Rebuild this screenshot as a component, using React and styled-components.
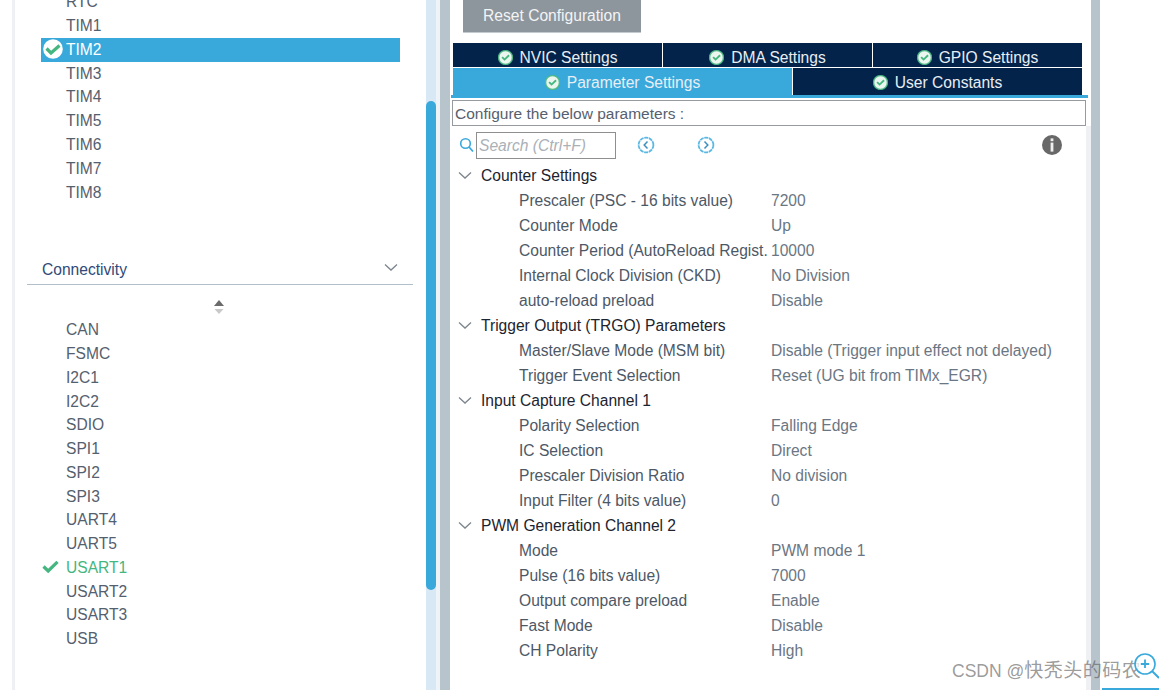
import React from "react";
import styled, { createGlobalStyle } from "styled-components";

const Global = createGlobalStyle`
  html, body { margin: 0; padding: 0; background: #fff; }
  body { font-family: "Liberation Sans", Arial, sans-serif; }
`;

const Page = styled.div`
  position: relative;
  width: 1159px;
  height: 690px;
  overflow: hidden;
  display: flex;
  background: #fff;
`;

const LeftGutter = styled.div`
  width: 12px;
  flex: none;
`;

const LeftEdge = styled.div`
  width: 3px;
  flex: none;
  background: #eef0f4;
`;

const LeftPanel = styled.aside`
  width: 411px;
  flex: none;
  padding-left: 12px;
  box-sizing: border-box;
  height: 690px;
`;

const List = styled.ul`
  list-style: none;
  margin: ${(p) => p.$top}px 0 0;
  padding: 0 26px 0 14px;
`;

const Item = styled.li`
  position: relative;
  height: 23.78px;
  line-height: 23.78px;
  padding-left: 25px;
  font-size: 15.6px;
  color: ${(p) => (p.$selected ? "#fff" : p.$ok ? "#45b680" : "#55606e")};
  background: ${(p) => (p.$selected ? "#39a9dc" : "transparent")};
`;

const ItemIcon = styled.span`
  position: absolute;
  left: ${(p) => p.$left}px;
  top: ${(p) => p.$top}px;
  display: flex;
`;

const SectionHead = styled.div`
  display: flex;
  align-items: center;
  justify-content: space-between;
  height: 30px;
  margin: 50px 13px 0 0;
  padding: 1px 15px 0;
  box-sizing: content-box;
  height: 29px;
  border-bottom: 1px solid #b0bfca;
  font-size: 15.6px;
  color: #2f4a78;
  svg {
    margin-bottom: 5px;
  }
`;

const Sorter = styled.div`
  display: flex;
  justify-content: center;
  height: 33px;
  padding: 15px 0 0;
  box-sizing: border-box;
  margin-right: 16px;
`;

const Track = styled.div`
  position: relative;
  width: 10px;
  flex: none;
  background: #d9e8f5;
`;

const Thumb = styled.div`
  position: absolute;
  left: 0;
  top: 101px;
  width: 10px;
  height: 489px;
  border-radius: 5px;
  background: #39a9dc;
`;

const Spacer = styled.div`
  width: ${(p) => p.$w}px;
  flex: none;
  background: ${(p) => p.$c || "transparent"};
`;

const Main = styled.main`
  width: 635px;
  flex: none;
  display: flex;
  flex-direction: column;
  height: 690px;
`;

const ResetButton = styled.div`
  width: 178px;
  height: 33px;
  margin-left: 12px;
  box-sizing: border-box;
  background: #8e969d;
  border-bottom: 1px solid #c4cbd0;
  color: #f2f4f5;
  font-size: 15.6px;
  line-height: 31px;
  text-align: center;
`;

const TabRow = styled.div`
  display: flex;
  margin-left: 2px;
  width: 629px;
  height: ${(p) => p.$h}px;
  margin-top: ${(p) => p.$mt}px;
`;

const Tab = styled.div`
  flex: ${(p) => p.$flex};
  box-sizing: border-box;
  padding-top: ${(p) => p.$pt || 0}px;
  display: flex;
  align-items: center;
  justify-content: center;
  gap: 7px;
  font-size: 15.6px;
  color: #e8eef3;
  background: ${(p) => (p.$active ? "#39a9dc" : "#03234b")};
  & + & {
    margin-left: 1px;
  }
`;

const TabLine = styled.div`
  height: 3px;
  width: 637px;
  background: #39a9dc;
`;

const ConfigBox = styled.div`
  margin-top: 2px;
  margin-left: 1px;
  width: 634px;
  height: 26px;
  box-sizing: border-box;
  border: 1px solid #979a9e;
  padding-left: 2px;
  font-size: 15.5px;
  line-height: 25px;
  color: #56606e;
`;

const SearchRow = styled.div`
  display: flex;
  align-items: center;
  height: 28px;
  margin-top: 5px;
  padding-left: 8px;
`;

const SearchInput = styled.div`
  width: 140px;
  height: 27px;
  margin-left: 2px;
  box-sizing: border-box;
  border: 1px solid #8f8f8f;
  padding-left: 2px;
  font-size: 15.6px;
  font-style: italic;
  line-height: 26px;
  color: #aab0b6;
`;

const NavButton = styled.span`
  display: flex;
  margin-left: ${(p) => p.$ml}px;
`;

const InfoButton = styled.span`
  display: flex;
  margin-left: auto;
  margin-right: 24px;
`;

const Tree = styled.div`
  margin-top: 4px;
`;

const GroupRow = styled.div`
  display: flex;
  align-items: center;
  height: 25px;
  padding-left: 7px;
  gap: 9px;
  font-size: 15.6px;
  color: #1d2430;
`;

const ParamRow = styled.div`
  display: grid;
  grid-template-columns: 252px 1fr;
  height: 25px;
  line-height: 25px;
  padding-left: 68px;
  font-size: 15.6px;
  white-space: nowrap;
`;

const ParamName = styled.span`
  color: #4d5866;
`;

const ParamValue = styled.span`
  color: #6b7683;
`;

const RightEdge = styled.div`
  width: 5px;
  flex: none;
  margin-top: 126px;
  background: #eef0f4;
`;

const Watermark = styled.div`
  position: absolute;
  left: 952px;
  top: 660px;
  font-size: 17.5px;
  line-height: 22px;
  white-space: nowrap;
  color: rgba(90, 90, 90, 0.62);
  font-family: "Liberation Sans", "Noto Sans CJK SC", sans-serif;
`;

const WatermarkName = styled.span`
  font-size: 19px;
  letter-spacing: 0.5px;
`;

const ZoomBadge = styled.span`
  position: absolute;
  left: 1133px;
  top: 652px;
  display: flex;
`;

const BottomRule = styled.div`
  position: absolute;
  left: 1102px;
  top: 688px;
  width: 57px;
  height: 2px;
  background: #39a9dc;
`;

const Badge = ({ size = 15, ring = "#eaf6ee" }) => (
  <svg width={size} height={size} viewBox="0 0 16 16">
    <circle cx="8" cy="8" r="7.6" fill={ring} />
    <circle cx="8" cy="8" r="7.4" fill="none" stroke="#45b680" strokeWidth="1.6" opacity="0.85" />
    <path d="M4.4 7.6 7 10.2 11.8 5.6" fill="none" stroke="#45b680" strokeWidth="2" />
  </svg>
);

const SelectedBadge = () => (
  <svg width="20" height="20" viewBox="0 0 20 20">
    <circle cx="10" cy="10" r="9.8" fill="#fff" />
    <path d="M3.5 9.5 8 14 16.5 6.5" fill="none" stroke="#45b680" strokeWidth="3.2" />
  </svg>
);

const Check = () => (
  <svg width="17" height="15" viewBox="0 0 17 15">
    <path d="M1.5 7.5 6.2 12 15.5 2.8" fill="none" stroke="#45b680" strokeWidth="3.2" />
  </svg>
);

const Chevron = () => (
  <svg width="14" height="9" viewBox="0 0 14 9">
    <path d="M1 1.5 7 7 13 1.5" fill="none" stroke="#7d858d" strokeWidth="1.3" />
  </svg>
);

const SortArrows = () => (
  <svg width="12" height="15" viewBox="0 0 12 15">
    <path d="M6 0 11 6H1Z" fill="#6b6b6b" />
    <path d="M6 14 10.5 9H1.5Z" fill="#c9c9c9" />
  </svg>
);

const SearchIcon = () => (
  <svg width="15" height="16" viewBox="0 0 15 16">
    <circle cx="6.5" cy="6.5" r="4.8" fill="none" stroke="#39a9dc" strokeWidth="1.6" />
    <path d="M10 10 14 14.5" stroke="#39a9dc" strokeWidth="1.8" />
  </svg>
);

const NavIcon = ({ dir }) => (
  <svg width="18" height="18" viewBox="0 0 18 18">
    <circle cx="9" cy="9" r="7.4" fill="none" stroke="#5bb8e4" strokeWidth="1.8" strokeDasharray="4 0.7" />
    <path d={dir === "l" ? "M10.5 5.6 7.2 9 10.5 12.4" : "M7.5 5.6 10.8 9 7.5 12.4"} fill="none" stroke="#3d8fc0" strokeWidth="1.5" />
  </svg>
);

const InfoIcon = () => (
  <svg width="20" height="20" viewBox="0 0 20 20">
    <circle cx="10" cy="10" r="10" fill="#686868" />
    <rect x="8.6" y="3.4" width="2.8" height="2.8" fill="#f0f0f0" />
    <rect x="8.6" y="7.6" width="2.8" height="9" fill="#f0f0f0" />
  </svg>
);

const ZoomIcon = () => (
  <svg width="27" height="29" viewBox="0 0 27 29">
    <circle cx="12" cy="12" r="10" fill="#fff" fillOpacity="0.7" stroke="#39a9dc" strokeWidth="1.6" />
    <path d="M12 7.5V16M7.8 12H16.2" stroke="#39a9dc" strokeWidth="1.8" />
    <path d="M19 19 26 26" stroke="#39a9dc" strokeWidth="2" />
  </svg>
);

const timers = ["TIM1", "TIM2", "TIM3", "TIM4", "TIM5", "TIM6", "TIM7", "TIM8"];
const connectivity = ["CAN", "FSMC", "I2C1", "I2C2", "SDIO", "SPI1", "SPI2", "SPI3", "UART4", "UART5", "USART1", "USART2", "USART3", "USB"];

const groups = [
  { title: "Counter Settings", rows: [
    ["Prescaler (PSC - 16 bits value)", "7200"],
    ["Counter Mode", "Up"],
    ["Counter Period (AutoReload Regist.", "10000"],
    ["Internal Clock Division (CKD)", "No Division"],
    ["auto-reload preload", "Disable"],
  ]},
  { title: "Trigger Output (TRGO) Parameters", rows: [
    ["Master/Slave Mode (MSM bit)", "Disable (Trigger input effect not delayed)"],
    ["Trigger Event Selection", "Reset (UG bit from TIMx_EGR)"],
  ]},
  { title: "Input Capture Channel 1", rows: [
    ["Polarity Selection", "Falling Edge"],
    ["IC Selection", "Direct"],
    ["Prescaler Division Ratio", "No division"],
    ["Input Filter (4 bits value)", "0"],
  ]},
  { title: "PWM Generation Channel 2", rows: [
    ["Mode", "PWM mode 1"],
    ["Pulse (16 bits value)", "7000"],
    ["Output compare preload", "Enable"],
    ["Fast Mode", "Disable"],
    ["CH Polarity", "High"],
  ]},
];

export default function App() {
  return (
    <Page>
      <Global />
      <LeftGutter />
      <LeftEdge />
      <LeftPanel>
        <List $top={-9.6}>
          <Item>RTC</Item>
          {timers.map((t) => (
            <Item key={t} $selected={t === "TIM2"}>
              {t === "TIM2" && <ItemIcon $left={2} $top={1}><SelectedBadge /></ItemIcon>}
              {t}
            </Item>
          ))}
        </List>
        <SectionHead>
          <span>Connectivity</span>
          <Chevron />
        </SectionHead>
        <Sorter><SortArrows /></Sorter>
        <List $top={0}>
          {connectivity.map((c) => (
            <Item key={c} $ok={c === "USART1"}>
              {c === "USART1" && <ItemIcon $left={1} $top={3}><Check /></ItemIcon>}
              {c}
            </Item>
          ))}
        </List>
      </LeftPanel>
      <Track><Thumb /></Track>
      <Spacer $w={4} $c="#eef3f8" />
      <Spacer $w={10} $c="#b8c4cb" />
      <Spacer $w={1} />
      <Main>
        <ResetButton>Reset Configuration</ResetButton>
        <TabRow $h={24} $mt={10}>
          <Tab $flex="209" $pt={5}><Badge />NVIC Settings</Tab>
          <Tab $flex="209" $pt={5}><Badge />DMA Settings</Tab>
          <Tab $flex="209" $pt={5}><Badge />GPIO Settings</Tab>
        </TabRow>
        <TabRow $h={27} $mt={1}>
          <Tab $flex="339" $active $pt={2}><Badge />Parameter Settings</Tab>
          <Tab $flex="289" $pt={2}><Badge />User Constants</Tab>
        </TabRow>
        <TabLine />
        <ConfigBox>Configure the below parameters :</ConfigBox>
        <SearchRow>
          <SearchIcon />
          <SearchInput>Search (Ctrl+F)</SearchInput>
          <NavButton $ml={21}><NavIcon dir="l" /></NavButton>
          <NavButton $ml={42}><NavIcon dir="r" /></NavButton>
          <InfoButton><InfoIcon /></InfoButton>
        </SearchRow>
        <Tree>
          {groups.map((g) => (
            <React.Fragment key={g.title}>
              <GroupRow><Chevron />{g.title}</GroupRow>
              {g.rows.map(([n, v]) => (
                <ParamRow key={n}>
                  <ParamName>{n}</ParamName>
                  <ParamValue>{v}</ParamValue>
                </ParamRow>
              ))}
            </React.Fragment>
          ))}
        </Tree>
      </Main>
      <RightEdge />
      <Spacer $w={9} $c="#b8c4cb" />
      <BottomRule />
      <Watermark>CSDN @<WatermarkName>快秃头的码农</WatermarkName></Watermark>
      <ZoomBadge><ZoomIcon /></ZoomBadge>
    </Page>
  );
}
